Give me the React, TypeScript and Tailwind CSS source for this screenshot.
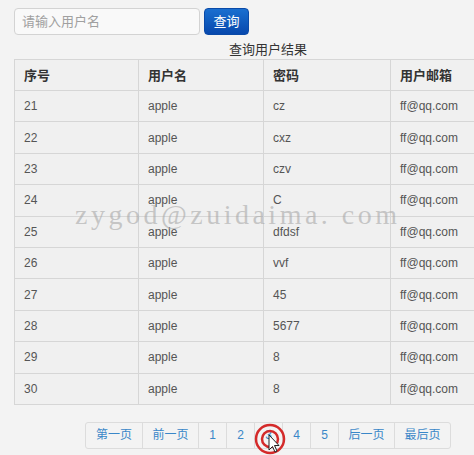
import React from 'react';

const rows = [
  { id: 21, name: 'apple', pwd: 'cz', email: 'ff@qq.com' },
  { id: 22, name: 'apple', pwd: 'cxz', email: 'ff@qq.com' },
  { id: 23, name: 'apple', pwd: 'czv', email: 'ff@qq.com' },
  { id: 24, name: 'apple', pwd: 'C', email: 'ff@qq.com' },
  { id: 25, name: 'apple', pwd: 'dfdsf', email: 'ff@qq.com' },
  { id: 26, name: 'apple', pwd: 'vvf', email: 'ff@qq.com' },
  { id: 27, name: 'apple', pwd: '45', email: 'ff@qq.com' },
  { id: 28, name: 'apple', pwd: '5677', email: 'ff@qq.com' },
  { id: 29, name: 'apple', pwd: '8', email: 'ff@qq.com' },
  { id: 30, name: 'apple', pwd: '8', email: 'ff@qq.com' },
];

const pages = ['第一页', '前一页', '1', '2', '3', '4', '5', '后一页', '最后页'];

const font = { fontFamily: '"Liberation Sans", "Noto Sans CJK SC", sans-serif' };

const App = () => {
  return (
    <div className="w-[474px] h-[455px] overflow-hidden bg-[#f3f3f3] relative" style={font}>
      <div className="w-[540px] pl-[14px] pt-[8px]">
        {/* Search bar */}
        <div className="flex items-center gap-[4px]">
          <input
            className="w-[186px] h-[27px] rounded-[4px] border border-[#d3d3d3] bg-[#f9f9f9] px-[7px] text-[13px] text-[#555] placeholder-[#a0a0a0] outline-none"
            placeholder="请输入用户名"
          />
          <button className="w-[45px] h-[27px] rounded-[4px] bg-gradient-to-b from-[#1a6fd0] to-[#0848ad] border border-[#0a4aa8] text-white text-[13px]">
            查询
          </button>
        </div>

        {/* Result table */}
        <div className="w-[508px]">
          <div className="text-center text-[13px] text-[#333] h-[19px] leading-[19px] mt-[5px]">查询用户结果</div>
          <table className="w-[508px] border-collapse border border-[#d6d6d6] bg-[#f0f0f0] table-fixed">
            <colgroup>
              <col className="w-[124px]" />
              <col className="w-[125px]" />
              <col className="w-[127px]" />
              <col />
            </colgroup>
            <thead>
              <tr className="h-[31px]">
                {['序号', '用户名', '密码', '用户邮箱'].map((h) => (
                  <th key={h} className="border border-[#d6d6d6] text-left pl-[9px] pt-[2px] text-[13px] font-bold text-[#333]">
                    {h}
                  </th>
                ))}
              </tr>
            </thead>
            <tbody>
              {rows.map((r) => (
                <tr key={r.id} className="h-[31.4px] text-[12px] text-[#555]">
                  <td className="border border-[#d6d6d6] pl-[9px]">{r.id}</td>
                  <td className="border border-[#d6d6d6] pl-[9px]">{r.name}</td>
                  <td className="border border-[#d6d6d6] pl-[9px]">{r.pwd}</td>
                  <td className="border border-[#d6d6d6] pl-[9px]">{r.email}</td>
                </tr>
              ))}
            </tbody>
          </table>

          {/* Pagination */}
          <div className="flex justify-center mt-[17px]">
            <div className="flex h-[27px] border border-[#dcdcdc] rounded-[3px] bg-[#f3f3f3]">
              {pages.map((p, i) => (
                <div
                  key={p}
                  className={`flex items-center justify-center text-[12px] text-[#3a87c8] ${i > 0 ? 'border-l border-[#dcdcdc]' : ''} ${p.length > 1 ? 'w-[56px]' : 'w-[28px]'}`}
                >
                  {p}
                </div>
              ))}
            </div>
          </div>
        </div>
      </div>

      {/* Watermark */}
      <div
        className="absolute left-[75px] top-[200px] text-[28px] leading-[30px] tracking-[3.5px] text-[#a8a8a8]/60 pointer-events-none whitespace-pre"
        style={{ fontFamily: '"Liberation Serif", serif' }}
      >
        zygod@zuidaima. com
      </div>

      {/* Click indicator */}
      <svg className="absolute left-[254px] top-[422px]" width="34" height="34" viewBox="0 0 34 34">
        <circle cx="16" cy="17" r="14" fill="none" stroke="#d42a2a" strokeWidth="2.5" />
        <circle cx="16" cy="17" r="8" fill="none" stroke="#d42a2a" strokeWidth="2.5" />
        <path d="M15 13 L15 28 L18.5 24.5 L21 30 L23 29 L20.5 23.5 L25 23.5 Z" fill="#fff" stroke="#222" strokeWidth="1" />
      </svg>
    </div>
  );
};

export default App;
